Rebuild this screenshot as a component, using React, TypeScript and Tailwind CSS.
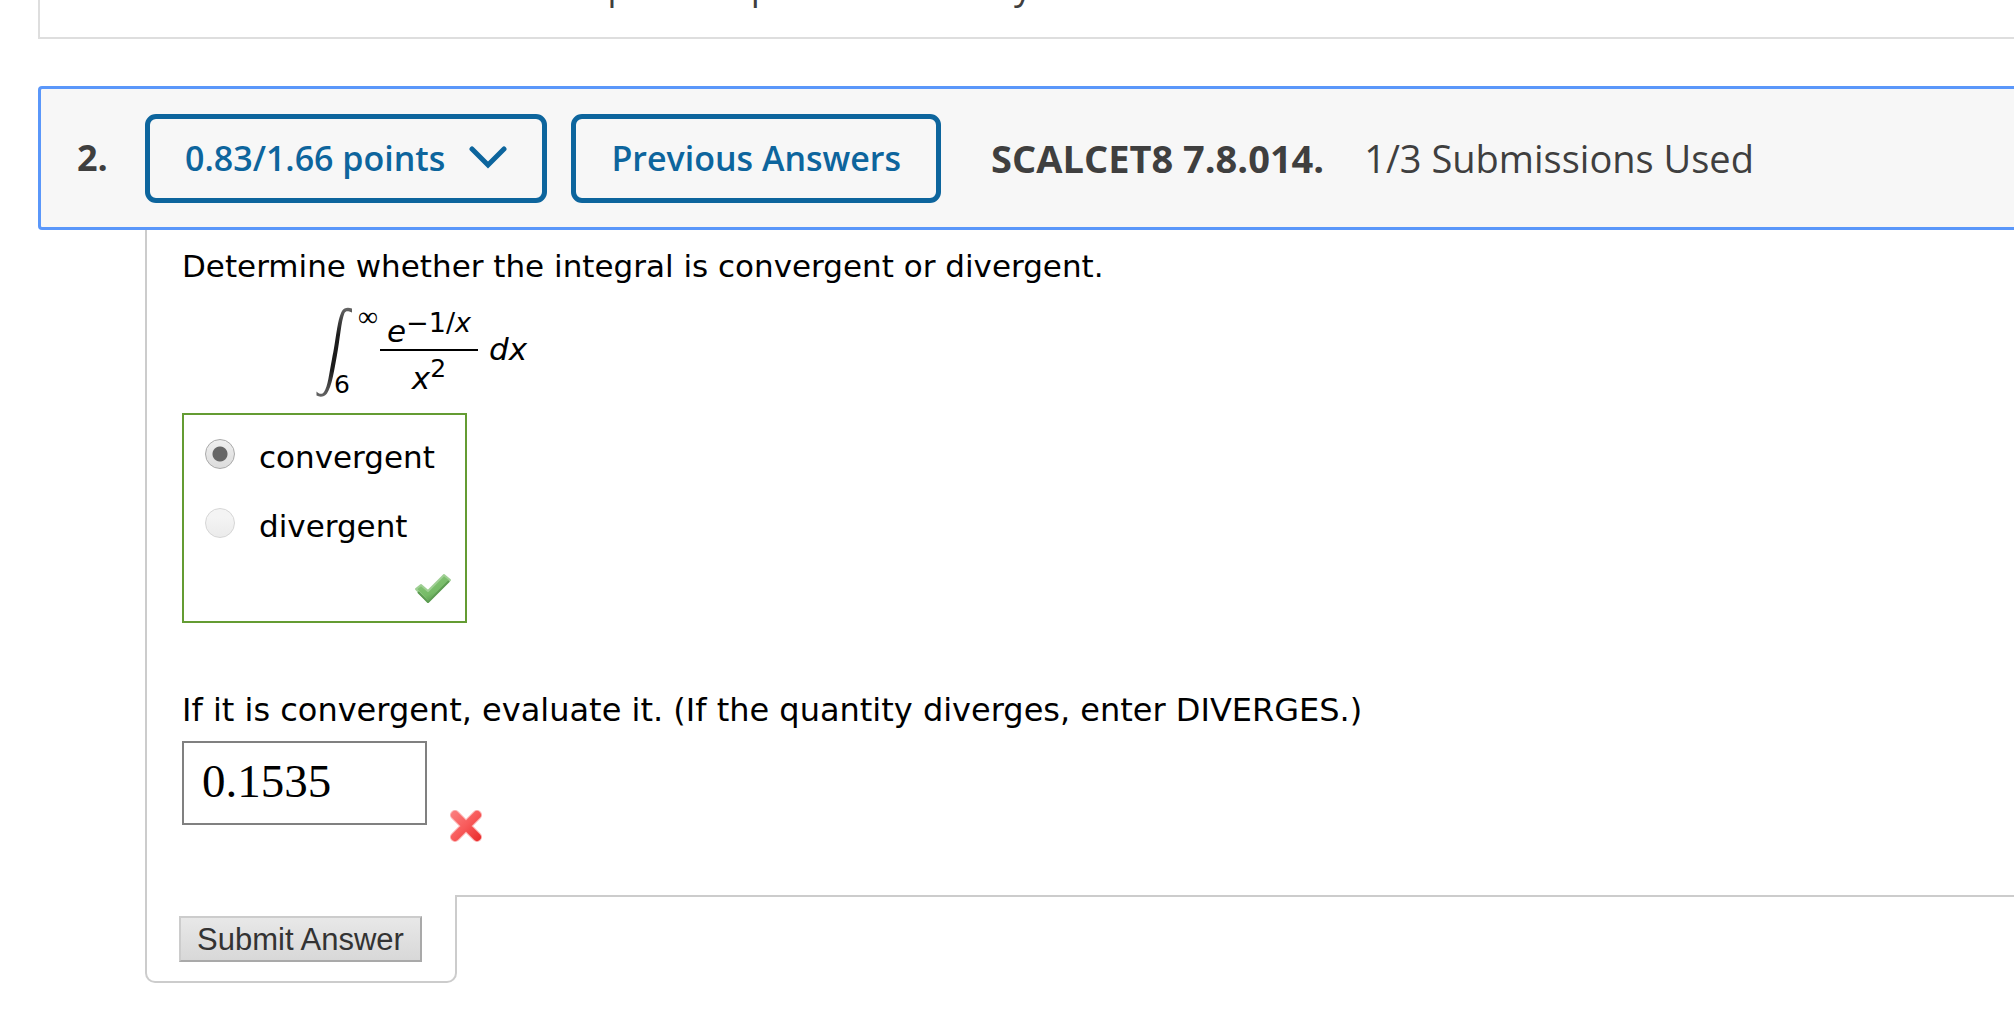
import { useState } from 'react';

const CHOICES = ['convergent', 'divergent'];

export default function App() {
  return (
    <main className="min-h-screen overflow-hidden bg-white pl-[38px] font-['Open_Sans',sans-serif] text-[#3f3f3f]">
      <ScoringPanel />
      <article className="mt-[47px]">
        <QuestionHeader />
        <QuestionBody />
      </article>
    </main>
  );
}

function ScoringPanel() {
  return (
    <section className="flex h-[39px] flex-col justify-end overflow-hidden border-b-2 border-l-2 border-[#dedede] pb-[29px] pl-[38px]">
      <p className="shrink-0 whitespace-nowrap text-[36px] leading-[44px]">
        Your best submission for each question part is used for your score.
      </p>
    </section>
  );
}

function QuestionHeader() {
  return (
    <header className="flex h-[144px] items-center whitespace-nowrap rounded-l-sm border-[3px] border-r-0 border-[#5a97fa] bg-[#f7f7f7] pl-9">
      <h2 className="w-[68px] text-[36px] font-bold leading-none">2.</h2>
      <button
        type="button"
        className="flex h-[89px] items-center gap-6 rounded-[11px] border-[5px] border-[#0d659d] px-[35px] text-[34px] font-semibold text-[#0d659d]"
      >
        0.83/1.66 points
        <svg className="h-6 w-[38px]" viewBox="0 0 38 24" fill="none" stroke="currentColor" strokeWidth="5" strokeLinecap="round" aria-hidden>
          <path d="M3 3 19 19 35 3" strokeLinejoin="miter" />
        </svg>
      </button>
      <button
        type="button"
        className="ml-6 flex h-[89px] items-center rounded-[11px] border-[5px] border-[#0d659d] px-[35px] text-[34px] font-semibold text-[#0d659d]"
      >
        Previous Answers
      </button>
      <strong className="ml-[50px] text-[38px] font-bold">SCALCET8 7.8.014.</strong>
      <span className="ml-10 text-[38px]">1/3 Submissions Used</span>
    </header>
  );
}

function QuestionBody() {
  const [choice, setChoice] = useState('convergent');

  return (
    <form
      className="ml-[107px] font-['DejaVu_Sans',sans-serif] text-[31px] leading-[40px] text-black"
      onSubmit={(e) => e.preventDefault()}
    >
      <div className="h-[665px] border-l-2 border-[#cccccc] pl-[35px] pt-4">
        <p className="whitespace-nowrap">Determine whether the integral is convergent or divergent.</p>
        <Integral />

        <fieldset
          aria-label="Convergence"
          className="mt-4 flex h-[210px] w-[285px] flex-col border-2 border-[#649c33] pl-[21px] pt-[22px]"
        >
          {CHOICES.map((name) => (
            <label key={name} className="flex h-[69px] items-start gap-6">
              <input
                type="radio"
                name="convergence"
                checked={choice === name}
                onChange={() => setChoice(name)}
                className="mt-[2px] size-[30px] shrink-0 appearance-none rounded-full border border-[#d6d6d6] bg-linear-to-b from-[#f4f4f4] from-30% to-[#ebebeb] checked:border-[#aaaaaa] checked:bg-[radial-gradient(circle,#666666_7px,transparent_8px),linear-gradient(#efefef,#dcdcdc)]"
              />
              <span>{name}</span>
            </label>
          ))}
          <CheckIcon />
        </fieldset>

        <label htmlFor="answer" className="mt-[67px] block whitespace-nowrap text-[32px]">
          If it is convergent, evaluate it. (If the quantity diverges, enter DIVERGES.)
        </label>
        <div className="mt-[11px] flex items-end gap-[22px]">
          <input
            id="answer"
            type="text"
            defaultValue="0.1535"
            className="h-[84px] w-[245px] border-2 border-[#808080] bg-white pb-1 pl-[18px] font-['Liberation_Serif',serif] text-[47px]"
          />
          <CrossIcon />
        </div>
      </div>

      <div className="flex">
        <div className="h-[88px] w-[312px] shrink-0 rounded-b-[10px] border-2 border-t-0 border-[#cccccc] pl-8 pt-[21px]">
          <button
            type="submit"
            className="h-[46px] w-[243px] whitespace-nowrap border-2 border-b-[#a9a9a9] border-l-[#cccccc] border-r-[#a9a9a9] border-t-[#cccccc] bg-linear-to-b from-[#e8e8e8] to-[#d8d8d8] font-['Liberation_Sans',sans-serif] text-[31px] leading-none text-[#333333]"
          >
            Submit Answer
          </button>
        </div>
        <div className="flex-1 border-t-2 border-[#cccccc]" />
      </div>
    </form>
  );
}

function Integral() {
  return (
    <div
      className="ml-[134px] mt-[21px] flex h-[90px]"
      role="math"
      aria-label="integral from 6 to infinity of e^(-1/x) / x^2 dx"
    >
      <svg className="h-[90px] w-9" viewBox="0 0 36 90" aria-hidden>
        <defs>
          <linearGradient id="integral-fill" x1="0" y1="0" x2="0" y2="1">
            <stop offset="0" stopColor="#666666" />
            <stop offset="0.300" stopColor="#1c1c1c" />
            <stop offset="0.700" stopColor="#1c1c1c" />
            <stop offset="1" stopColor="#666666" />
          </linearGradient>
        </defs>
        <path
          d="M36 1.500C32 .3 28 .5 26 4 21 13 20 34 16 52 13 67 12 79 8 85 6 88 3 87 .5 84.500L.5 88.500C4 90.500 8 90 11 86.500 16 79 18 64 21 48 24 32 25 15 28.500 6 30 3.500 32 4 36 5.500Z"
          fill="url(#integral-fill)"
        />
      </svg>
      <div className="-ml-[18px] flex w-[46px] flex-col justify-between">
        <span className="pl-6 font-['Liberation_Serif',serif] text-[28px] leading-5">∞</span>
        <span className="text-[25px] leading-6">6</span>
      </div>
      <div className="flex flex-col items-center">
        <div className="flex h-[45px] items-end border-b-2 border-black px-[7px] italic">
          <span className="leading-9">e</span>
          <span className="pb-[10px] text-[27px] leading-8">
            <span className="not-italic">−1/</span>x
          </span>
        </div>
        <div className="flex italic">
          <span className="leading-[54px]">x</span>
          <sup className="top-0 text-[25px] not-italic leading-9">2</sup>
        </div>
      </div>
      <span className="pl-[11px] italic leading-[84px]">dx</span>
    </div>
  );
}

function CheckIcon() {
  return (
    <svg className="ml-[208px] mt-[-2px] h-8 w-10 shrink-0" viewBox="0 0 40 32" role="img" aria-label="Correct">
      <defs>
        <linearGradient id="check-fill" x1="0" y1="0" x2="0.600" y2="1">
          <stop offset="0" stopColor="#8cc97c" />
          <stop offset="0.700" stopColor="#76bb67" />
          <stop offset="1" stopColor="#4f9045" />
        </linearGradient>
      </defs>
      <path
        d="M3 16 8 12 15 18 31 2 37 7 15 29Z"
        fill="url(#check-fill)"
        stroke="#9fcf94"
        strokeWidth="2"
        strokeLinejoin="round"
      />
      <path d="M5 19 15 29 36 8" fill="none" stroke="#5c9c51" strokeWidth="2" strokeLinejoin="round" />
    </svg>
  );
}

function CrossIcon() {
  return (
    <svg className="mb-[-18px] size-[34px]" viewBox="0 0 34 34" fill="none" strokeLinecap="round" role="img" aria-label="Incorrect">
      <defs>
        <linearGradient id="cross-fill" gradientUnits="userSpaceOnUse" x1="2" y1="2" x2="32" y2="32">
          <stop offset="0" stopColor="#fb8080" />
          <stop offset="0.500" stopColor="#f85a5a" />
          <stop offset="1" stopColor="#e82a2a" />
        </linearGradient>
      </defs>
      <path d="M6 6 28 28M28 6 6 28" stroke="#fbb3b3" strokeWidth="10" />
      <path d="M6 6 28 28M28 6 6 28" stroke="url(#cross-fill)" strokeWidth="8" />
    </svg>
  );
}
